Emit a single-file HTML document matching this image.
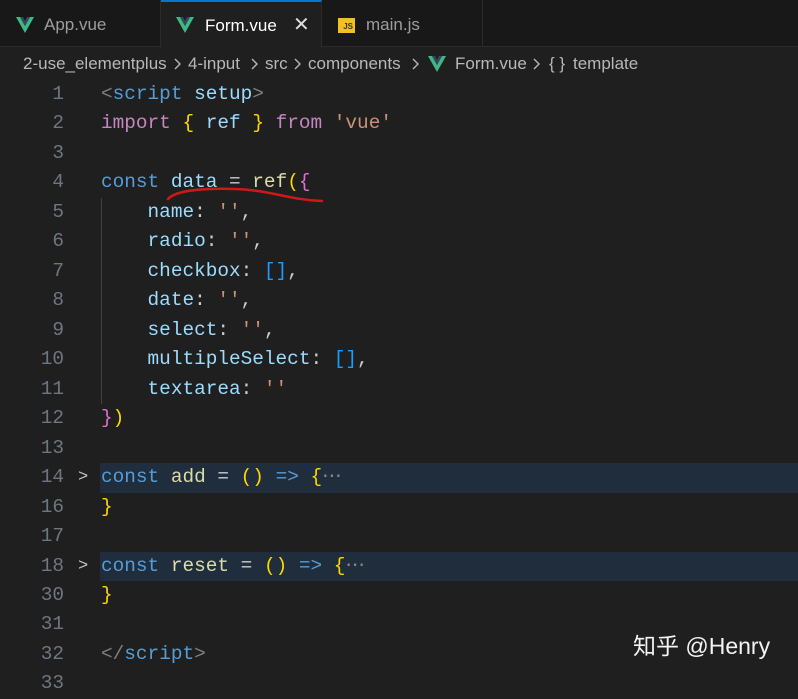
<!DOCTYPE html>
<html><head><meta charset="utf-8"><style>
*{margin:0;padding:0;box-sizing:border-box}
body{width:798px;height:681px;background:#1f1f1f;overflow:hidden;position:relative;font-family:"Liberation Sans","Noto Sans CJK SC",sans-serif}
.tabs{position:absolute;left:0;top:0;width:798px;height:47px;background:#181818;border-bottom:1px solid #2b2b2b}
.tab{position:absolute;top:0;height:47px;width:161px;border-right:1px solid #2b2b2b;color:#9d9d9d;font-size:17px;line-height:50px;padding-left:44px}
.tab.active{background:#1f1f1f;color:#fff;border-top:2px solid #0078d4;height:48px;line-height:47px}
.vue{position:absolute;width:18px;height:16px}
.c{position:absolute;top:54px;color:#b8b8b8;font-size:17px;white-space:nowrap}
.code{position:absolute;left:0;top:80px;width:798px;font-family:"Liberation Mono",monospace;font-size:19.4px}
.ln{height:29.47px;line-height:29.47px;position:relative;white-space:pre}
.num{position:absolute;right:734px;color:#6e7681;text-align:right}
.t{position:absolute;left:101px;color:#cccccc}
.hl{position:absolute;left:100px;right:0;top:0;bottom:0;background:#1f2d3d}
.fold{position:absolute;left:78px;color:#c5c5c5;font-size:17px}
.kw{color:#569cd6}.pk{color:#c586c0}.v{color:#9cdcfe}.f{color:#dcdcaa}.y{color:#ffd700}.s{color:#ce9178}.b{color:#179fff}.tag{color:#808080}.p{color:#da70d6}.d{color:#8c8c8c}
</style></head><body>
<div class="tabs">
 <div class="tab" style="left:0">App.vue</div>
 <div class="tab active" style="left:161px">Form.vue<span style="position:absolute;left:132px;color:#ddd;font-size:20px">✕</span></div>
 <div class="tab" style="left:322px">main.js</div>
</div>
<svg class="vue" style="left:16px;top:17px" viewBox="0 0 18 16"><path d="M0 0h4l5 9 5-9h4L9 16z" fill="#41b883"/><path d="M4 0h3l2 4 2-4h3L9 9z" fill="#34495e"/></svg>
<svg class="vue" style="left:176px;top:17px" viewBox="0 0 18 16"><path d="M0 0h4l5 9 5-9h4L9 16z" fill="#41b883"/><path d="M4 0h3l2 4 2-4h3L9 9z" fill="#34495e"/></svg>
<div style="position:absolute;left:338px;top:18px;width:17px;height:15px;background:#f1bf26;color:#333;font-size:8px;font-weight:bold;line-height:18px;text-align:right;padding-right:2px">JS</div>
<div class="c" style="left:23px">2-use_elementplus</div>
<div class="c" style="left:188px">4-input</div>
<div class="c" style="left:265px">src</div>
<div class="c" style="left:308px">components</div>
<div class="c" style="left:455px">Form.vue</div>
<div class="c" style="left:549px">{ }</div>
<div class="c" style="left:573px">template</div>
<svg style="position:absolute;left:0;top:0" width="798" height="80"><g stroke="#b8b8b8" stroke-width="1.4" fill="none"><path d="M175 59l5 5-5 5"/><path d="M252 59l5 5-5 5"/><path d="M295 59l5 5-5 5"/><path d="M413 59l5 5-5 5"/><path d="M534 59l5 5-5 5"/></g></svg>
<svg class="vue" style="left:428px;top:56px" viewBox="0 0 18 16"><path d="M0 0h4l5 9 5-9h4L9 16z" fill="#41b883"/><path d="M4 0h3l2 4 2-4h3L9 9z" fill="#34495e"/></svg>
<div style="position:absolute;left:101px;top:198px;width:1px;height:206px;background:#404040"></div>
<div class="code">
<div class="ln"><span class="num">1</span><span class="t"><span class="tag">&lt;</span><span class="kw">script</span> <span class="v">setup</span><span class="tag">&gt;</span></span></div>
<div class="ln"><span class="num">2</span><span class="t"><span class="pk">import</span> <span class="y">{</span> <span class="v">ref</span> <span class="y">}</span> <span class="pk">from</span> <span class="s">'vue'</span></span></div>
<div class="ln"><span class="num">3</span></div>
<div class="ln"><span class="num">4</span><span class="t"><span class="kw">const</span> <span class="v">data</span> = <span class="f">ref</span><span class="y">(</span><span class="p">{</span></span></div>
<div class="ln"><span class="num">5</span><span class="t">    <span class="v">name</span>: <span class="s">''</span>,</span></div>
<div class="ln"><span class="num">6</span><span class="t">    <span class="v">radio</span>: <span class="s">''</span>,</span></div>
<div class="ln"><span class="num">7</span><span class="t">    <span class="v">checkbox</span>: <span class="b">[]</span>,</span></div>
<div class="ln"><span class="num">8</span><span class="t">    <span class="v">date</span>: <span class="s">''</span>,</span></div>
<div class="ln"><span class="num">9</span><span class="t">    <span class="v">select</span>: <span class="s">''</span>,</span></div>
<div class="ln"><span class="num">10</span><span class="t">    <span class="v">multipleSelect</span>: <span class="b">[]</span>,</span></div>
<div class="ln"><span class="num">11</span><span class="t">    <span class="v">textarea</span>: <span class="s">''</span></span></div>
<div class="ln"><span class="num">12</span><span class="t"><span class="p">}</span><span class="y">)</span></span></div>
<div class="ln"><span class="num">13</span></div>
<div class="ln"><div class="hl"></div><span class="num">14</span><span class="fold">&gt;</span><span class="t"><span class="kw">const</span> <span class="f">add</span> = <span class="y">()</span> <span class="kw">=&gt;</span> <span class="y">{</span><span class="d">⋯</span></span></div>
<div class="ln"><span class="num">16</span><span class="t"><span class="y">}</span></span></div>
<div class="ln"><span class="num">17</span></div>
<div class="ln"><div class="hl"></div><span class="num">18</span><span class="fold">&gt;</span><span class="t"><span class="kw">const</span> <span class="f">reset</span> = <span class="y">()</span> <span class="kw">=&gt;</span> <span class="y">{</span><span class="d">⋯</span></span></div>
<div class="ln"><span class="num">30</span><span class="t"><span class="y">}</span></span></div>
<div class="ln"><span class="num">31</span></div>
<div class="ln"><span class="num">32</span><span class="t"><span class="tag">&lt;/</span><span class="kw">script</span><span class="tag">&gt;</span></span></div>
<div class="ln"><span class="num">33</span></div>
</div>
<svg style="position:absolute;left:0;top:0" width="798" height="681"><path d="M168 199 C175 191,200 188,235 189 C270 190,290 200,322 201" stroke="#d01818" stroke-width="2.5" fill="none" stroke-linecap="round"/></svg>
<div style="position:absolute;left:633px;top:627px;color:#f4f4f4;font-size:23px;font-family:'Liberation Sans','Noto Sans CJK SC',sans-serif">知乎 @Henry</div>
</body></html>
